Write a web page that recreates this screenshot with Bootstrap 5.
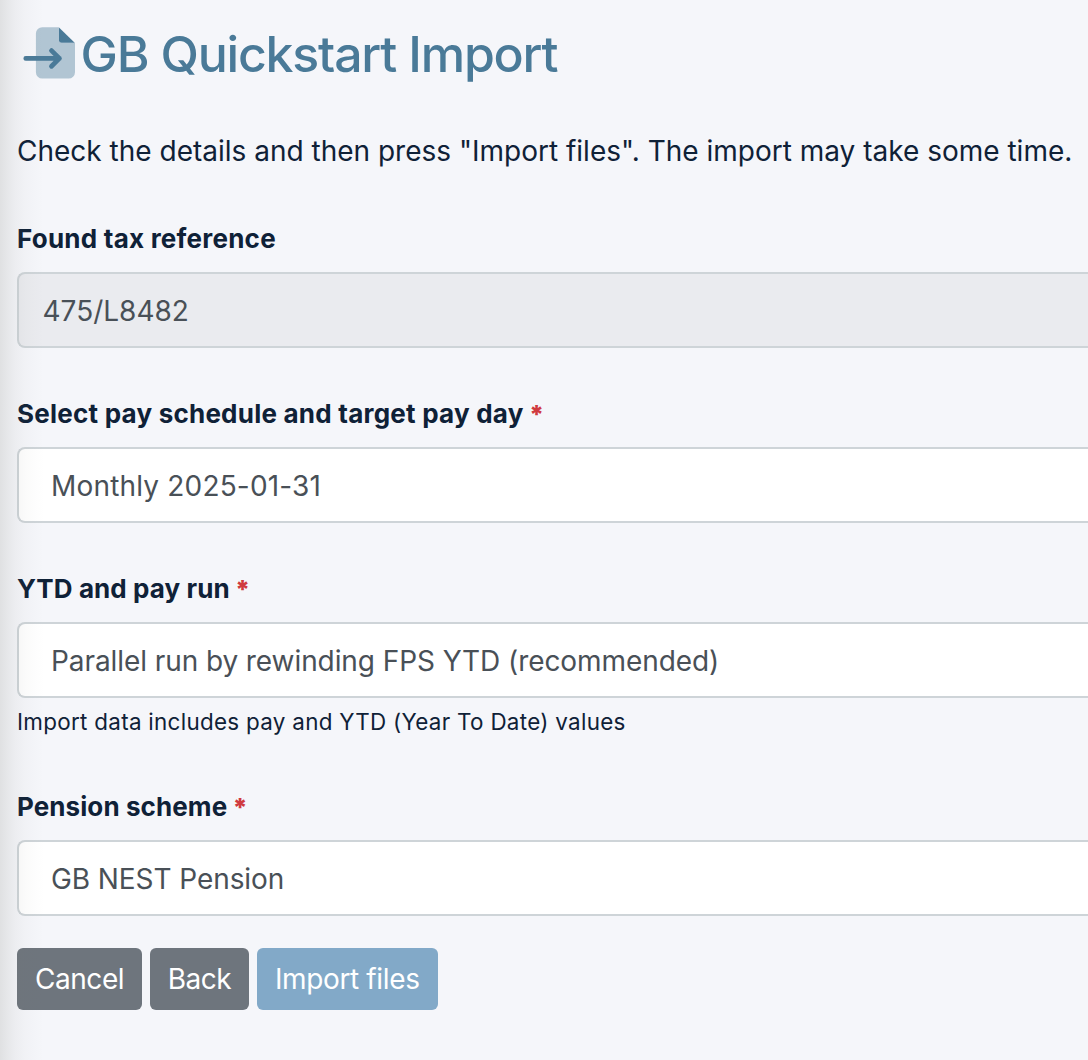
<!DOCTYPE html>
<html lang="en">
<head>
<meta charset="utf-8">
<meta name="viewport" content="width=device-width, initial-scale=1">
<title>GB Quickstart Import</title>
<link href="https://cdn.jsdelivr.net/npm/bootstrap@5.3.0/dist/css/bootstrap.min.css" rel="stylesheet">
<style>
body{background:#f5f6fa;color:#0f2137;font-family:Inter,"Liberation Sans",sans-serif}
.page{height:1060px;padding:18px 0 0 17px}
/* Shadow cast by the sidebar over the page edge */
.page::before{content:"";position:absolute;left:0;top:0;width:44px;height:1060px;pointer-events:none;background:linear-gradient(to right,rgba(112,112,102,.16),rgba(112,112,102,.115) 7px,rgba(112,112,102,.065) 15px,rgba(112,112,102,.03) 25px,rgba(112,112,102,.01) 35px,rgba(112,112,102,0))}
.title{height:72px;color:#4a7a98;font-size:50px;line-height:72px;font-weight:500;letter-spacing:-1.2px}
.title svg{width:64px;height:60px;flex:none;margin-right:-.5px}
.intro{font-size:28px;line-height:42px;margin:40px 0 47px}
.form-label{font-size:26px;line-height:39px;font-weight:700;margin:0 0 14px;letter-spacing:.09px}
.form-label.wide-label{letter-spacing:.23px}
.req{color:#d03a3f;font-weight:900;font-size:25px;line-height:1;margin-left:-1px}
.form-control,.form-select{height:76px;border:2px solid #ced4d8;border-right:0;border-radius:8px 0 0 8px;font-size:28px;line-height:42px;padding:16px 24px 14px;color:#495057;background-image:none}
.form-control{padding-left:23.5px}
.form-select{padding-left:32px;background-color:#fff;letter-spacing:-.08px}
.form-select.date-select{letter-spacing:.18px}
.form-control:disabled{background:#eaebef;color:#495057;opacity:1}
.field{margin-bottom:46px}
.help{font-size:22.4px;line-height:34px;margin-top:7px;letter-spacing:.3px}
.field.with-help{margin-bottom:48px}
.btn{height:62px;border:0;border-radius:6px;font-size:28px;line-height:42px;padding:10px 18px;color:#fff;letter-spacing:-.45px}
.btn-secondary{background:#6e757d}
.btn-back{padding:10px 17.5px}
.btn-import{background:#82a9c8;width:181px;letter-spacing:-.36px}
</style>
<script src="https://cdn.jsdelivr.net/npm/bootstrap@5.3.0/dist/js/bootstrap.bundle.min.js"></script>
</head>
<body>
<main class="page position-relative overflow-hidden text-nowrap">
<h1 class="title d-flex align-items-center m-0">
<svg viewBox="0 0 64 60" aria-hidden="true"><path fill="#b1c5d3" d="M25.3 3.2H42v13a2.5 2.5 0 0 0 2.5 2.5H58v29.5a6.4 6.4 0 0 1-6.4 6.4H25.3a6.4 6.4 0 0 1-6.4-6.4V9.6a6.4 6.4 0 0 1 6.4-6.4z"/><path fill="#4a7a98" d="M42 3.4l15.7 15.4H44.5A2.5 2.5 0 0 1 42 16.3z"/><path fill="none" stroke="#4a7a98" stroke-width="4.8" stroke-linecap="round" stroke-linejoin="round" d="M8.8 34.4h33.6M34.5 26.6l7.9 7.8-7.9 7.8"/></svg><span>GB Quickstart Import</span></h1>
<p class="intro">Check the details and then press "Import files". The import may take some time.</p>
<form>
<div class="field"><label class="form-label wide-label d-block" for="tax">Found tax reference</label><input id="tax" class="form-control" value="475/L8482" disabled></div>
<div class="field"><label class="form-label wide-label d-block" for="pay">Select pay schedule and target pay day <span class="req">*</span></label><select id="pay" class="form-select date-select"><option>Monthly 2025-01-31</option></select></div>
<div class="field with-help"><label class="form-label d-block" for="ytd">YTD and pay run <span class="req">*</span></label><select id="ytd" class="form-select"><option>Parallel run by rewinding FPS YTD (recommended)</option></select><div class="help">Import data includes pay and YTD (Year To Date) values</div></div>
<div class="field mb-0"><label class="form-label d-block" for="pen">Pension scheme <span class="req">*</span></label><select id="pen" class="form-select"><option>GB NEST Pension</option></select></div>
<div class="d-flex gap-2 pt-2 mt-4"><button type="button" class="btn btn-secondary">Cancel</button><button type="button" class="btn btn-secondary btn-back">Back</button><button type="button" class="btn btn-import">Import files</button></div>
</form>
</main>
</body>
</html>
